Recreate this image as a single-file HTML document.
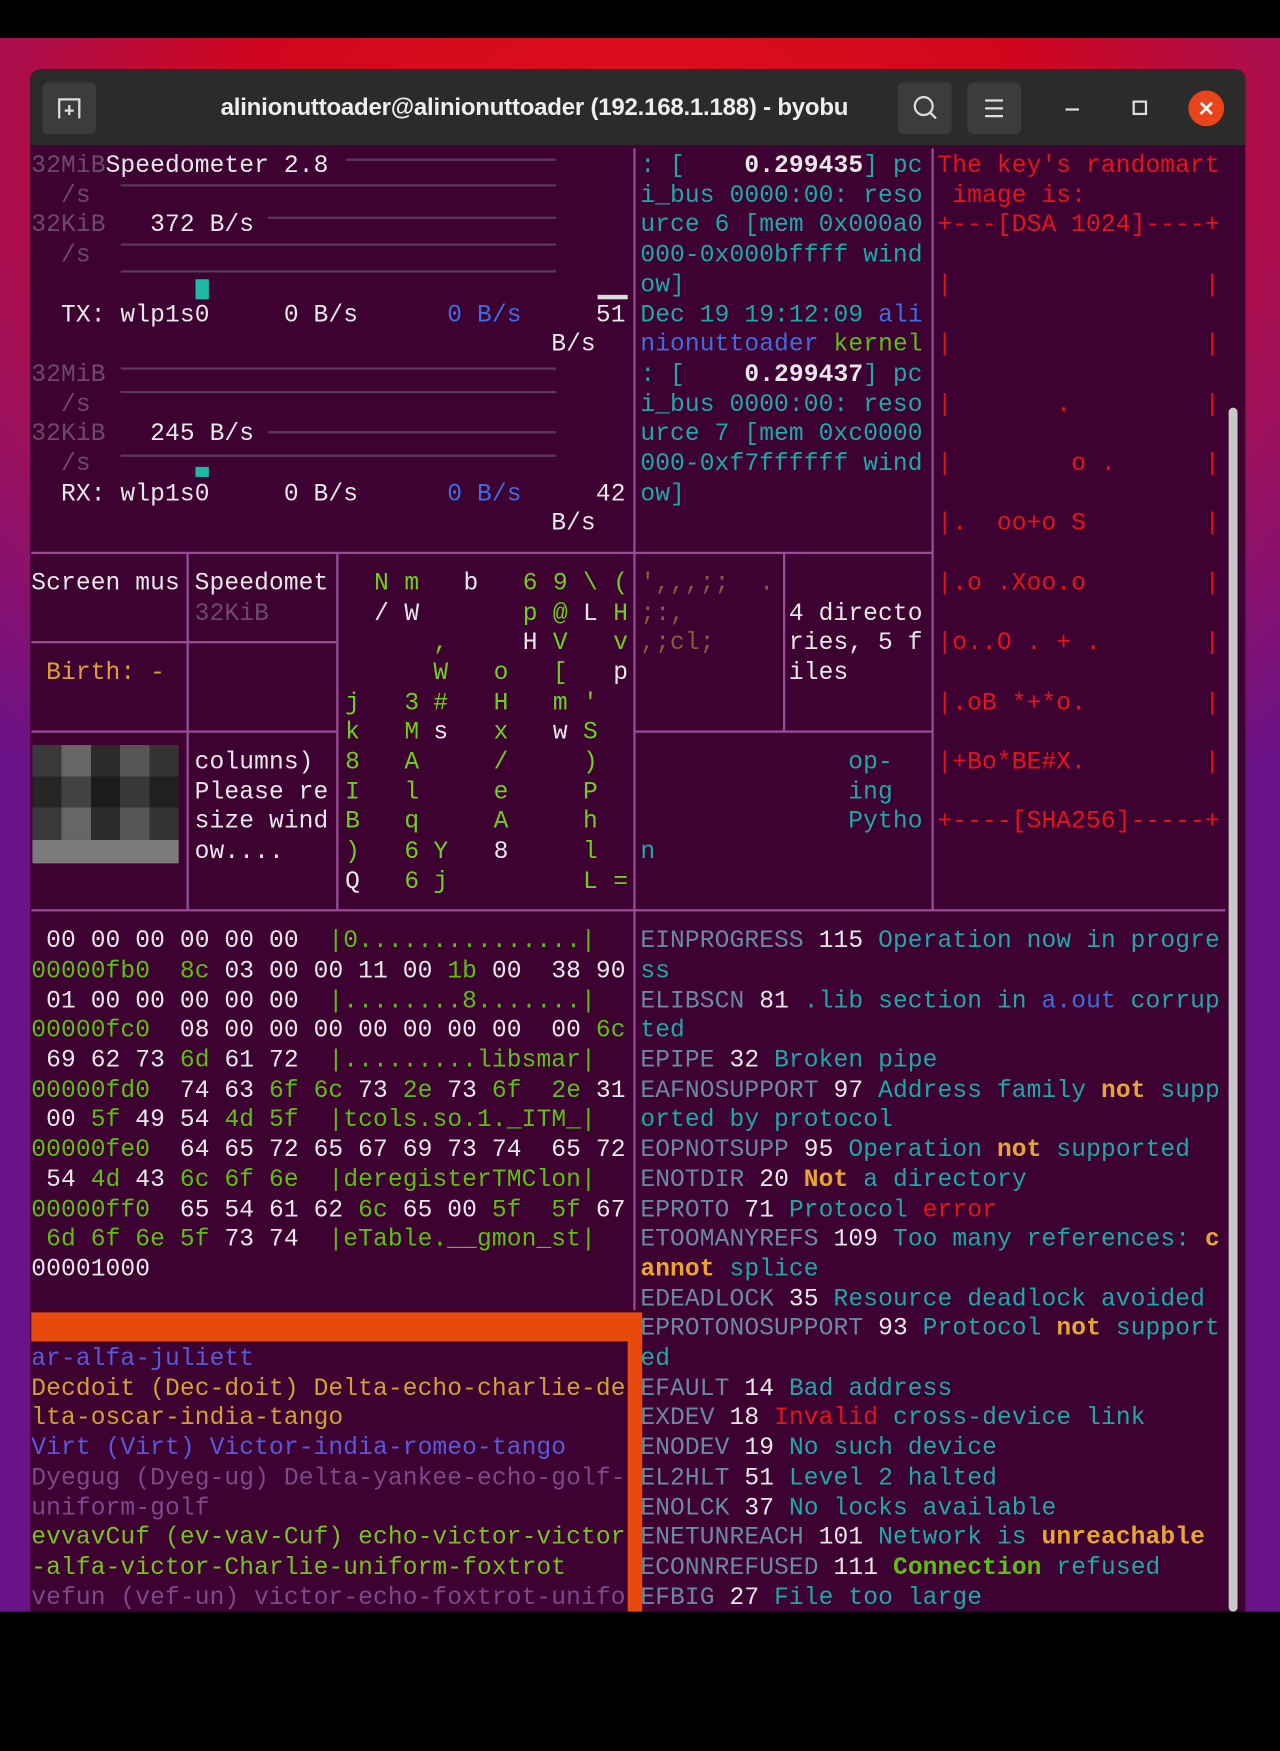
<!DOCTYPE html>
<html><head><meta charset="utf-8">
<style>
html,body{margin:0;padding:0;background:#000;overflow:hidden;width:1280px;height:1751px}
#s{position:absolute;left:0;top:0;width:1146px;height:1568px;transform:scale(1.11693);transform-origin:0 0;overflow:hidden;
background:#000}
#bg{position:absolute;left:0;top:34px;width:1146px;height:1410px;
background:radial-gradient(ellipse 900px 700px at 573px 100px,#e0101c 0%,#d0061e 40%,#a0105a 70%,#6a1288 100%)}
#win{position:absolute;left:27px;top:62px;width:1088px;height:1382px;background:#3a0130;border-radius:9px 9px 0 0;overflow:hidden}
#tb{position:absolute;left:0;top:0;width:1088px;height:68px;background:#2b2b2b}
.btn{position:absolute;top:12px;width:48px;height:46px;background:#3c3c3c;border-radius:5px}
#title{position:absolute;left:126px;top:0;width:651px;height:68px;text-align:center;white-space:nowrap;font:bold 21.5px "Liberation Sans",sans-serif;line-height:68px;color:#eee;letter-spacing:-0.2px}
#term{position:absolute;left:28px;top:130px;width:1087px;height:1313px;background:#3d0132}
.l{position:absolute;white-space:pre;font:22px/26.7px "Liberation Mono",monospace;letter-spacing:0.1px;color:#e8e8e8;
top:calc(136px + var(--r)*26.7px);left:calc(28px + var(--c,0)*13.3px)}
.p{position:absolute;left:var(--x);top:calc(136px + var(--r)*26.7px);font:22px/26.7px "Liberation Mono",monospace;color:#6fcf1a}
.d{color:#6e4a6a}.w{color:#e8e8e8}.t{color:#1fa8a8}.b{color:#3d6de0}.g{color:#5fbf10}.r{color:#e3141c}.o{color:#e0a030}
.gy{color:#6a8aa0}.sb{font-weight:bold}.yo{color:#e8a631;font-weight:bold}
.dim{color:#7b3f7b}.og{color:#d4a030}.pb{color:#5a5ad8}.pu{color:#7a4a8a}.gn{color:#7ac020}
.hl{position:absolute;height:2px;background:#9a4e98}
.vl{position:absolute;width:2px;background:#9a4e98}
.gl{position:absolute;height:2px;background:#5a3a5a}
</style></head><body>
<div id="s">
<div id="bg"></div>
<div id="win">
 <div id="tb">
  <div id="title">alinionuttoader@alinionuttoader (192.168.1.188) - byobu</div>
  <div class="btn" style="left:11px"><svg width="48" height="46" viewBox="0 0 48 46"><path d="M15 32V15h18v17M24 20v9M20 25h8" stroke="#ddd" stroke-width="2" fill="none"/></svg></div>
  <div class="btn" style="left:777px"><svg width="48" height="46"><circle cx="23" cy="21" r="8" stroke="#ddd" stroke-width="2" fill="none"/><path d="M29 27l5 5" stroke="#ddd" stroke-width="2"/></svg></div>
  <div class="btn" style="left:839px"><svg width="48" height="46"><path d="M16 16h16M16 23h16M16 30h16" stroke="#ddd" stroke-width="2"/></svg></div>
  <svg style="position:absolute;left:920px;top:19px" width="168" height="32"><path d="M7 17h12" stroke="#ddd" stroke-width="2"/><rect x="68" y="10" width="11" height="11" stroke="#ddd" stroke-width="2" fill="none"/><circle cx="133" cy="16" r="16" fill="#e9441a"/><path d="M128 11l10 10M138 11l-10 10" stroke="#fff" stroke-width="2.4"/></svg>
 </div>
</div>
<div id="term"></div>
<div style="position:absolute;left:1100px;top:365px;width:8px;height:1078px;background:#c8c8c8;border-radius:4px"></div>

<div class="hl" style="left:28px;top:494px;width:807px"></div>
<div class="vl" style="left:567px;top:133px;height:1040px"></div>
<div class="vl" style="left:834px;top:133px;height:682px"></div>
<div class="vl" style="left:167px;top:495px;height:320px"></div>
<div class="vl" style="left:301px;top:495px;height:320px"></div>
<div class="vl" style="left:701px;top:495px;height:160px"></div>
<div class="hl" style="left:28px;top:574px;width:274px"></div>
<div class="hl" style="left:28px;top:654px;width:274px"></div>
<div class="hl" style="left:568px;top:654px;width:267px"></div>
<div class="hl" style="left:28px;top:814px;width:1069px"></div>

<div class="gl" style="left:310px;top:142px;width:188px"></div>
<div class="gl" style="left:108px;top:165px;width:390px"></div>
<div class="gl" style="left:240px;top:194px;width:258px"></div>
<div class="gl" style="left:108px;top:218px;width:390px"></div>
<div class="gl" style="left:108px;top:242px;width:390px"></div>
<div style="position:absolute;left:175px;top:250px;width:12px;height:18px;background:#1cb8a8"></div>
<div style="position:absolute;left:535px;top:264px;width:27px;height:4px;background:#ddd"></div>
<div class="gl" style="left:108px;top:329px;width:390px"></div>
<div class="gl" style="left:108px;top:350px;width:390px"></div>
<div class="gl" style="left:240px;top:386px;width:258px"></div>
<div class="gl" style="left:108px;top:407px;width:390px"></div>
<div style="position:absolute;left:175px;top:418px;width:12px;height:9px;background:#1cb8a8"></div>

<div class="l" style="--r:0"><span class="d">32MiB</span>Speedometer 2.8</div>
<div class="l d" style="--r:1;--c:2">/s</div>
<div class="l" style="--r:2"><span class="d">32KiB</span>   372 B/s</div>
<div class="l d" style="--r:3;--c:2">/s</div>
<div class="l" style="--r:5;--c:2">TX: wlp1s0     0 B/s      <span class="b">0 B/s</span>     51</div>
<div class="l" style="--r:6;--c:35">B/s</div>
<div class="l d" style="--r:7">32MiB</div>
<div class="l d" style="--r:8;--c:2">/s</div>
<div class="l" style="--r:9"><span class="d">32KiB</span>   245 B/s</div>
<div class="l d" style="--r:10;--c:2">/s</div>
<div class="l" style="--r:11;--c:2">RX: wlp1s0     0 B/s      <span class="b">0 B/s</span>     42</div>
<div class="l" style="--r:12;--c:35">B/s</div>

<div class="l t" style="--r:0;--c:41">: [    <span class="w sb">0.299435</span>] pc</div>
<div class="l t" style="--r:1;--c:41">i_bus 0000:00: reso</div>
<div class="l t" style="--r:2;--c:41">urce 6 [mem 0x000a0</div>
<div class="l t" style="--r:3;--c:41">000-0x000bffff wind</div>
<div class="l t" style="--r:4;--c:41">ow]</div>
<div class="l t" style="--r:5;--c:41">Dec 19 19:12:09 <span class="b">ali</span></div>
<div class="l" style="--r:6;--c:41"><span class="b">nionuttoader</span> <span class="g">kernel</span></div>
<div class="l t" style="--r:7;--c:41">: [    <span class="w sb">0.299437</span>] pc</div>
<div class="l t" style="--r:8;--c:41">i_bus 0000:00: reso</div>
<div class="l t" style="--r:9;--c:41">urce 7 [mem 0xc0000</div>
<div class="l t" style="--r:10;--c:41">000-0xf7ffffff wind</div>
<div class="l t" style="--r:11;--c:41">ow]</div>

<div class="l r" style="--r:0;--c:61">The key's randomart</div>
<div class="l r" style="--r:1;--c:61"> image is:</div>
<div class="l r" style="--r:2;--c:61">+---[DSA 1024]----+</div>
<div class="l r" style="--r:4;--c:61">|                 |</div>
<div class="l r" style="--r:6;--c:61">|                 |</div>
<div class="l r" style="--r:8;--c:61">|       .         |</div>
<div class="l r" style="--r:10;--c:61">|        o .      |</div>
<div class="l r" style="--r:12;--c:61">|.  oo+o S        |</div>
<div class="l r" style="--r:14;--c:61">|.o .Xoo.o        |</div>
<div class="l r" style="--r:16;--c:61">|o..O . + .       |</div>
<div class="l r" style="--r:18;--c:61">|.oB *+*o.        |</div>
<div class="l r" style="--r:20;--c:61">|+Bo*BE#X.        |</div>
<div class="l r" style="--r:22;--c:61">+----[SHA256]-----+</div>

<div class="l" style="--r:14">Screen mus</div>
<div class="l" style="--r:14;--c:11">Speedomet</div>
<div class="l d" style="--r:15;--c:11">32KiB</div>
<div class="l o" style="--r:17;--c:1">Birth: -</div>
<div style="position:absolute;left:29px;top:667px;width:131px;height:85px;background:
linear-gradient(180deg,rgba(0,0,0,0) 0 33%,rgba(0,0,0,.35) 33% 66%,rgba(0,0,0,0) 66%),
linear-gradient(90deg,#3a3a3a 0 20%,#666 20% 40%,#2a2a2a 40% 60%,#555 60% 80%,#333 80%);"></div>
<div style="position:absolute;left:29px;top:752px;width:131px;height:21px;background:#7a7a7a"></div>
<div class="l" style="--r:20;--c:11">columns)</div>
<div class="l" style="--r:21;--c:11">Please re</div>
<div class="l" style="--r:22;--c:11">size wind</div>
<div class="l" style="--r:23;--c:11">ow....</div>

<div class="p" style="--r:14;--x:335px">N</div><div class="p" style="--r:14;--x:362px">m</div><div class="p w" style="--r:14;--x:415px">b</div><div class="p" style="--r:14;--x:468px">6</div><div class="p" style="--r:14;--x:495px">9</div><div class="p" style="--r:14;--x:522px">\</div><div class="p" style="--r:14;--x:549px">(</div>
<div class="p w" style="--r:15;--x:335px">/</div><div class="p w" style="--r:15;--x:362px">W</div><div class="p" style="--r:15;--x:468px">p</div><div class="p" style="--r:15;--x:495px">@</div><div class="p w" style="--r:15;--x:522px">L</div><div class="p" style="--r:15;--x:549px">H</div>
<div class="p" style="--r:16;--x:388px">,</div><div class="p w" style="--r:16;--x:468px">H</div><div class="p" style="--r:16;--x:495px">V</div><div class="p" style="--r:16;--x:549px">v</div>
<div class="p" style="--r:17;--x:388px">W</div><div class="p" style="--r:17;--x:442px">o</div><div class="p" style="--r:17;--x:495px">[</div><div class="p w" style="--r:17;--x:549px">p</div>
<div class="p" style="--r:18;--x:309px">j</div><div class="p" style="--r:18;--x:362px">3</div><div class="p" style="--r:18;--x:388px">#</div><div class="p" style="--r:18;--x:442px">H</div><div class="p" style="--r:18;--x:495px">m</div><div class="p" style="--r:18;--x:522px">'</div>
<div class="p" style="--r:19;--x:309px">k</div><div class="p" style="--r:19;--x:362px">M</div><div class="p w" style="--r:19;--x:388px">s</div><div class="p" style="--r:19;--x:442px">x</div><div class="p w" style="--r:19;--x:495px">w</div><div class="p" style="--r:19;--x:522px">S</div>
<div class="p" style="--r:20;--x:309px">8</div><div class="p" style="--r:20;--x:362px">A</div><div class="p" style="--r:20;--x:442px">/</div><div class="p" style="--r:20;--x:522px">)</div>
<div class="p" style="--r:21;--x:309px">I</div><div class="p" style="--r:21;--x:362px">l</div><div class="p" style="--r:21;--x:442px">e</div><div class="p" style="--r:21;--x:522px">P</div>
<div class="p" style="--r:22;--x:309px">B</div><div class="p" style="--r:22;--x:362px">q</div><div class="p" style="--r:22;--x:442px">A</div><div class="p" style="--r:22;--x:522px">h</div>
<div class="p" style="--r:23;--x:309px">)</div><div class="p" style="--r:23;--x:362px">6</div><div class="p" style="--r:23;--x:388px">Y</div><div class="p w" style="--r:23;--x:442px">8</div><div class="p" style="--r:23;--x:522px">l</div>
<div class="p w" style="--r:24;--x:309px">Q</div><div class="p" style="--r:24;--x:362px">6</div><div class="p" style="--r:24;--x:388px">j</div><div class="p" style="--r:24;--x:522px">L</div><div class="p" style="--r:24;--x:549px">=</div>

<div class="l" style="--r:14;--c:41;color:#8a5a3a">',,,;;  .</div>
<div class="l" style="--r:15;--c:41;color:#8a5a3a">;:,</div>
<div class="l" style="--r:16;--c:41;color:#8a5a3a">,;cl;</div>
<div class="l" style="--r:15;--c:51">4 directo</div>
<div class="l" style="--r:16;--c:51">ries, 5 f</div>
<div class="l" style="--r:17;--c:51">iles</div>
<div class="l t" style="--r:20;--c:55">op-</div>
<div class="l t" style="--r:21;--c:55">ing</div>
<div class="l t" style="--r:22;--c:55">Pytho</div>
<div class="l t" style="--r:23;--c:41">n</div>

<div class="l" style="--r:26"> 00 00 00 00 00 00  <span class="g">|0...............|</span></div>
<div class="l" style="--r:27"><span class="g">00000fb0</span>  <span class="g">8c</span> 03 00 00 11 00 <span class="g">1b</span> 00  38 90</div>
<div class="l" style="--r:28"> 01 00 00 00 00 00  <span class="g">|........8.......|</span></div>
<div class="l" style="--r:29"><span class="g">00000fc0</span>  08 00 00 00 00 00 00 00  00 <span class="g">6c</span></div>
<div class="l" style="--r:30"> 69 62 73 <span class="g">6d</span> 61 72  <span class="g">|.........libsmar|</span></div>
<div class="l" style="--r:31"><span class="g">00000fd0</span>  74 63 <span class="g">6f 6c</span> 73 <span class="g">2e</span> 73 <span class="g">6f</span>  <span class="g">2e</span> 31</div>
<div class="l" style="--r:32"> 00 <span class="g">5f</span> 49 54 <span class="g">4d 5f</span>  <span class="g">|tcols.so.1._ITM_|</span></div>
<div class="l" style="--r:33"><span class="g">00000fe0</span>  64 65 72 65 67 69 73 74  65 72</div>
<div class="l" style="--r:34"> 54 <span class="g">4d</span> 43 <span class="g">6c 6f 6e</span>  <span class="g">|deregisterTMClon|</span></div>
<div class="l" style="--r:35"><span class="g">00000ff0</span>  65 54 61 62 <span class="g">6c</span> 65 00 <span class="g">5f</span>  <span class="g">5f</span> 67</div>
<div class="l" style="--r:36"> <span class="g">6d 6f 6e 5f</span> 73 74  <span class="g">|eTable.__gmon_st|</span></div>
<div class="l" style="--r:37">00001000</div>

<div style="position:absolute;left:28px;top:1175px;width:547px;height:26px;background:#e8490c"></div>
<div style="position:absolute;left:562px;top:1200px;width:13px;height:243px;background:#e8490c"></div>
<div class="l pb" style="--r:40">ar-alfa-juliett</div>
<div class="l og" style="--r:41">Decdoit (Dec-doit) Delta-echo-charlie-de</div>
<div class="l og" style="--r:42">lta-oscar-india-tango</div>
<div class="l pb" style="--r:43">Virt (Virt) Victor-india-romeo-tango</div>
<div class="l pu" style="--r:44">Dyegug (Dyeg-ug) Delta-yankee-echo-golf-</div>
<div class="l pu" style="--r:45">uniform-golf</div>
<div class="l gn" style="--r:46">evvavCuf (ev-vav-Cuf) echo-victor-victor</div>
<div class="l gn" style="--r:47">-alfa-victor-Charlie-uniform-foxtrot</div>
<div class="l pu" style="--r:48">vefun (vef-un) victor-echo-foxtrot-unifo</div>

<div class="l t" style="--r:26;--c:41"><span class="gy">EINPROGRESS</span> <span class="w">115</span> Operation now in progre</div>
<div class="l t" style="--r:27;--c:41">ss</div>
<div class="l t" style="--r:28;--c:41"><span class="gy">ELIBSCN</span> <span class="w">81</span> .lib section in <span class="b">a.out</span> corrup</div>
<div class="l t" style="--r:29;--c:41">ted</div>
<div class="l t" style="--r:30;--c:41"><span class="gy">EPIPE</span> <span class="w">32</span> Broken pipe</div>
<div class="l t" style="--r:31;--c:41"><span class="gy">EAFNOSUPPORT</span> <span class="w">97</span> Address family <span class="yo">not</span> supp</div>
<div class="l t" style="--r:32;--c:41">orted by protocol</div>
<div class="l t" style="--r:33;--c:41"><span class="gy">EOPNOTSUPP</span> <span class="w">95</span> Operation <span class="yo">not</span> supported</div>
<div class="l t" style="--r:34;--c:41"><span class="gy">ENOTDIR</span> <span class="w">20</span> <span class="yo">Not</span> a directory</div>
<div class="l t" style="--r:35;--c:41"><span class="gy">EPROTO</span> <span class="w">71</span> Protocol <span class="r">error</span></div>
<div class="l t" style="--r:36;--c:41"><span class="gy">ETOOMANYREFS</span> <span class="w">109</span> Too many references: <span class="yo">c</span></div>
<div class="l t" style="--r:37;--c:41"><span class="yo">annot</span> splice</div>
<div class="l t" style="--r:38;--c:41"><span class="gy">EDEADLOCK</span> <span class="w">35</span> Resource deadlock avoided</div>
<div class="l t" style="--r:39;--c:41"><span class="gy">EPROTONOSUPPORT</span> <span class="w">93</span> Protocol <span class="yo">not</span> support</div>
<div class="l t" style="--r:40;--c:41">ed</div>
<div class="l t" style="--r:41;--c:41"><span class="gy">EFAULT</span> <span class="w">14</span> Bad address</div>
<div class="l t" style="--r:42;--c:41"><span class="gy">EXDEV</span> <span class="w">18</span> <span class="r">Invalid</span> cross-device link</div>
<div class="l t" style="--r:43;--c:41"><span class="gy">ENODEV</span> <span class="w">19</span> No such device</div>
<div class="l t" style="--r:44;--c:41"><span class="gy">EL2HLT</span> <span class="w">51</span> Level 2 halted</div>
<div class="l t" style="--r:45;--c:41"><span class="gy">ENOLCK</span> <span class="w">37</span> No locks available</div>
<div class="l t" style="--r:46;--c:41"><span class="gy">ENETUNREACH</span> <span class="w">101</span> Network is <span class="yo">unreachable</span></div>
<div class="l t" style="--r:47;--c:41"><span class="gy">ECONNREFUSED</span> <span class="w">111</span> <span class="g sb">Connection</span> refused</div>
<div class="l t" style="--r:48;--c:41"><span class="gy">EFBIG</span> <span class="w">27</span> File too large</div>

<div style="position:absolute;left:0;top:1443px;width:1146px;height:125px;background:#000"></div>
</div>
</body></html>
